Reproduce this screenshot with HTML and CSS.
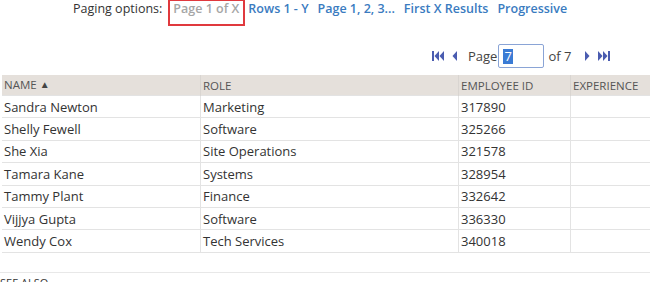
FILE: index.html
```html
<!DOCTYPE html>
<html>
<head>
<meta charset="utf-8">
<link rel="stylesheet" href="styles.css">
</head>
<body>
<div class="page">
  <div class="options">
    <span class="label">Paging options:</span>
    <span class="current">Page 1 of X</span>
    <a class="opt first">Rows 1 - Y</a>
    <a class="opt">Page 1, 2, 3...</a>
    <a class="opt">First X Results</a>
    <a class="opt">Progressive</a>
  </div>
  <div class="pager">
    <span class="nav">
      <svg width="15" height="10" viewBox="0 0 15 10"><rect x="0" y="0" width="2" height="10" fill="#4a5cb0"/><polygon points="7,0 2.5,5 7,10" fill="#4a5cb0"/><polygon points="12,0 7.5,5 12,10" fill="#4a5cb0"/></svg>
      <svg class="gap" width="6" height="10" viewBox="0 0 6 10"><polygon points="5,0 0.5,5 5,10" fill="#4a5cb0"/></svg>
    </span>
    <span class="pg">Page</span>
    <span class="input"><span class="sel">7</span></span>
    <span class="pg after">of 7</span>
    <span class="nav next">
      <svg width="6" height="10" viewBox="0 0 6 10"><polygon points="1,0 5.5,5 1,10" fill="#4a5cb0"/></svg>
      <svg class="gap" width="15" height="10" viewBox="0 0 15 10"><polygon points="3,0 7.5,5 3,10" fill="#4a5cb0"/><polygon points="8,0 12.5,5 8,10" fill="#4a5cb0"/><rect x="13" y="0" width="2" height="10" fill="#4a5cb0"/></svg>
    </span>
  </div>
  <table class="grid">
    <thead>
      <tr><th class="c1">NAME<span class="arrow">&#9650;</span></th><th class="c2">ROLE</th><th class="c3">EMPLOYEE ID</th><th class="c4">EXPERIENCE</th></tr>
    </thead>
    <tbody>
      <tr><td>Sandra Newton</td><td>Marketing</td><td>317890</td><td></td></tr>
      <tr><td>Shelly Fewell</td><td>Software</td><td>325266</td><td></td></tr>
      <tr><td>She Xia</td><td>Site Operations</td><td>321578</td><td></td></tr>
      <tr><td>Tamara Kane</td><td>Systems</td><td>328954</td><td></td></tr>
      <tr><td>Tammy Plant</td><td>Finance</td><td>332642</td><td></td></tr>
      <tr><td>Vijjya Gupta</td><td>Software</td><td>336330</td><td></td></tr>
      <tr><td>Wendy Cox</td><td>Tech Services</td><td>340018</td><td></td></tr>
    </tbody>
  </table>
  <div class="see">SEE ALSO</div>
</div>
</body>
</html>
```
FILE: styles.css
```css
html, body {
  margin: 0;
  padding: 0;
  background: #fff;
  overflow: hidden;
}
body {
  font-family: "Open Sans", "Noto Sans", sans-serif;
  color: #333;
  width: 650px;
  height: 282px;
}
.page {
  width: 650px;
}
.options {
  display: flex;
  align-items: flex-start;
  box-sizing: border-box;
  height: 26px;
  padding-top: 1px;
  font-size: 12.5px;
  line-height: 15px;
  white-space: nowrap;
}
.label {
  margin-left: 73px;
  color: #333;
}
.current {
  margin-left: 6px;
  margin-top: -1px;
  border: 2px solid #e0393e;
  border-top-width: 1px;
  padding: 0 4px 8px 3px;
  color: #a6a6a6;
  font-weight: 600;
  width: 66px;
  height: 15px;
}
.opt {
  color: #3a7bbf;
  font-weight: 600;
  margin-left: 9px;
}
.opt.first {
  margin-left: 3px;
}
.pager {
  display: flex;
  align-items: center;
  height: 26px;
  margin-top: 17px;
  padding-left: 432px;
  font-size: 13px;
  color: #444;
}
.nav {
  display: flex;
  align-items: center;
}
.gap {
  margin-left: 5px;
}
.pg {
  margin-left: 10px;
}
.input {
  border: 1px solid #8aa4d6;
  border-radius: 2px;
  display: flex;
  align-items: center;
  padding-left: 4px;
  box-sizing: border-box;
  width: 46px;
  height: 24px;
  margin-left: 1px;
}
.sel {
  background: #3a7bd5;
  color: #fff;
  line-height: 15px;
  padding: 0 1px;
}
.pg.after {
  margin-left: 4px;
}
.next {
  margin-left: 13px;
}
.grid {
  margin-top: 6px;
  margin-left: 2px;
  border-collapse: collapse;
  table-layout: fixed;
  width: 700px;
  font-size: 13px;
}
.grid th {
  background: #e5e0db;
  color: #555;
  font-weight: 400;
  font-size: 11.5px;
  text-align: left;
  height: 19px;
  padding: 0 0 0 2px;
  border-left: 1px solid #d9d5d1;
  line-height: 19px;
}
.grid th:first-child, .grid td:first-child {
  border-left: none;
}
.arrow {
  font-size: 10px;
  margin-left: 3px;
  color: #444;
  position: relative;
  top: -1px;
}
.c1 { width: 196px; }
.c2 { width: 255px; }
.c3 { width: 109px; }
.c4 { width: 130px; }
.grid td {
  height: 22.4px;
  padding: 0 0 0 2px;
  border-top: 1px solid #e3e3e3;
  border-bottom: 1px solid #e3e3e3;
  border-left: 1px solid #e3e3e3;
  color: #333;
  line-height: 20px;
  white-space: nowrap;
  box-sizing: border-box;
}
.see {
  margin-top: 19px;
  border-top: 1px solid #e8e8e8;
  padding-top: 3px;
  font-size: 11px;
  line-height: 14px;
  color: #333;
}
```
